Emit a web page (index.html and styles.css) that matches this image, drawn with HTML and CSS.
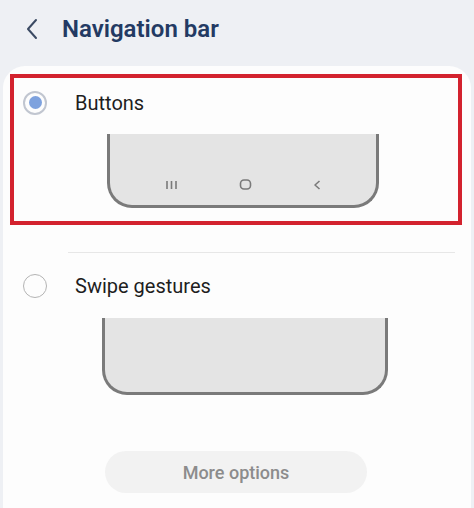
FILE: index.html
```html
<!DOCTYPE html>
<html lang="en">
<head>
  <meta charset="UTF-8">
  <meta name="viewport" content="width=device-width, initial-scale=1.0">
  <title>Navigation bar</title>
  <link rel="stylesheet" href="styles.css">
</head>
<body>
  <header class="top-bar">
    <svg class="back" width="14" height="22" viewBox="0 0 14 22">
      <path d="M11 2 L3 11 L11 20" fill="none" stroke="#3b4a63" stroke-width="2" stroke-linecap="round" stroke-linejoin="round"/>
    </svg>
    <h1>Navigation bar</h1>
  </header>

  <main class="card">
    <div class="option selected">
      <div class="option-row">
        <span class="radio checked"></span>
        <span class="label">Buttons</span>
      </div>
      <div class="phone phone-small">
        <div class="nav-keys">
          <svg width="13" height="10" viewBox="0 0 13 10">
            <path d="M2 1 V9 M6.5 1 V9 M11 1 V9" stroke="#7a7a7a" stroke-width="1.6"/>
          </svg>
          <svg width="13" height="11" viewBox="0 0 13 11">
            <rect x="1.5" y="1" width="10" height="9" rx="3.5" fill="none" stroke="#7a7a7a" stroke-width="1.6"/>
          </svg>
          <svg width="9" height="10" viewBox="0 0 9 10">
            <path d="M6.5 1 L2 5 L6.5 9" fill="none" stroke="#7a7a7a" stroke-width="1.6" stroke-linejoin="round"/>
          </svg>
        </div>
      </div>
    </div>

    <div class="divider"></div>

    <div class="option">
      <div class="option-row">
        <span class="radio"></span>
        <span class="label">Swipe gestures</span>
      </div>
      <div class="phone phone-large"></div>
    </div>

    <button class="more">More options</button>
  </main>
</body>
</html>
```

FILE: styles.css
```css
body {
  margin: 0;
  background-color: #eef0f4;
  font-family: Roboto, "Noto Sans", Arial, sans-serif;
  color: #1e1e1e;
  height: 508px;
  overflow: hidden;
}
.top-bar {
  display: flex;
  align-items: center;
  height: 58px;
  padding-left: 25px;
  padding-bottom: 8px;
}
.top-bar h1 {
  margin: 0 0 0 23px;
  font-size: 24px;
  font-weight: 600;
  color: #233a63;
}
.card {
  margin: 0 3px;
  height: 442px;
  padding-top: 8px;
  box-sizing: border-box;
  background-color: #fdfdfd;
  border-radius: 22px 22px 0 0;
}
.option {
  display: flex;
  flex-direction: column;
}
.option.selected {
  margin-left: 7px;
  width: 452px;
  height: 151px;
  box-sizing: border-box;
  border: 4px solid #d3222e;
}
.option-row {
  display: flex;
  align-items: center;
  height: 25px;
  margin-top: 12px;
  padding-left: 9px;
}
.option:not(.selected) .option-row {
  margin-top: 20px;
  padding-left: 20px;
}
.label {
  margin-left: 28px;
  font-size: 20px;
}
.radio {
  width: 24px;
  height: 24px;
  box-sizing: border-box;
  border: 1.5px solid #b4b4b4;
  border-radius: 50%;
}
.radio.checked {
  border: 2px solid #c1c6d0;
  display: flex;
  align-items: center;
  justify-content: center;
}
.radio.checked::after {
  content: "";
  width: 13px;
  height: 13px;
  border-radius: 50%;
  background-color: #7ea2de;
}
.phone {
  box-sizing: border-box;
  background-color: #e4e4e4;
  border: 3px solid #7a7a7a;
  border-top: none;
  border-radius: 0 0 25px 25px;
}
.phone-small {
  margin: 19px 0 0 93px;
  width: 272px;
  height: 74px;
  display: flex;
  align-items: flex-end;
  justify-content: center;
}
.phone-large {
  margin: 20px 0 0 99px;
  width: 286px;
  height: 77px;
}
.nav-keys {
  display: flex;
  align-items: center;
  gap: 61px;
  padding-bottom: 15px;
  padding-left: 1px;
}
.nav-keys svg {
  display: block;
}
.divider {
  height: 1px;
  margin: 27px 16px 0 65px;
  background-color: #e7e7e7;
}
.more {
  display: block;
  margin: 56px 0 0 102px;
  width: 262px;
  height: 42px;
  border: none;
  border-radius: 21px;
  background-color: #f2f2f2;
  color: #8c8c8c;
  font-family: Roboto, "Noto Sans", Arial, sans-serif;
  font-size: 18px;
  font-weight: 500;
}
```
